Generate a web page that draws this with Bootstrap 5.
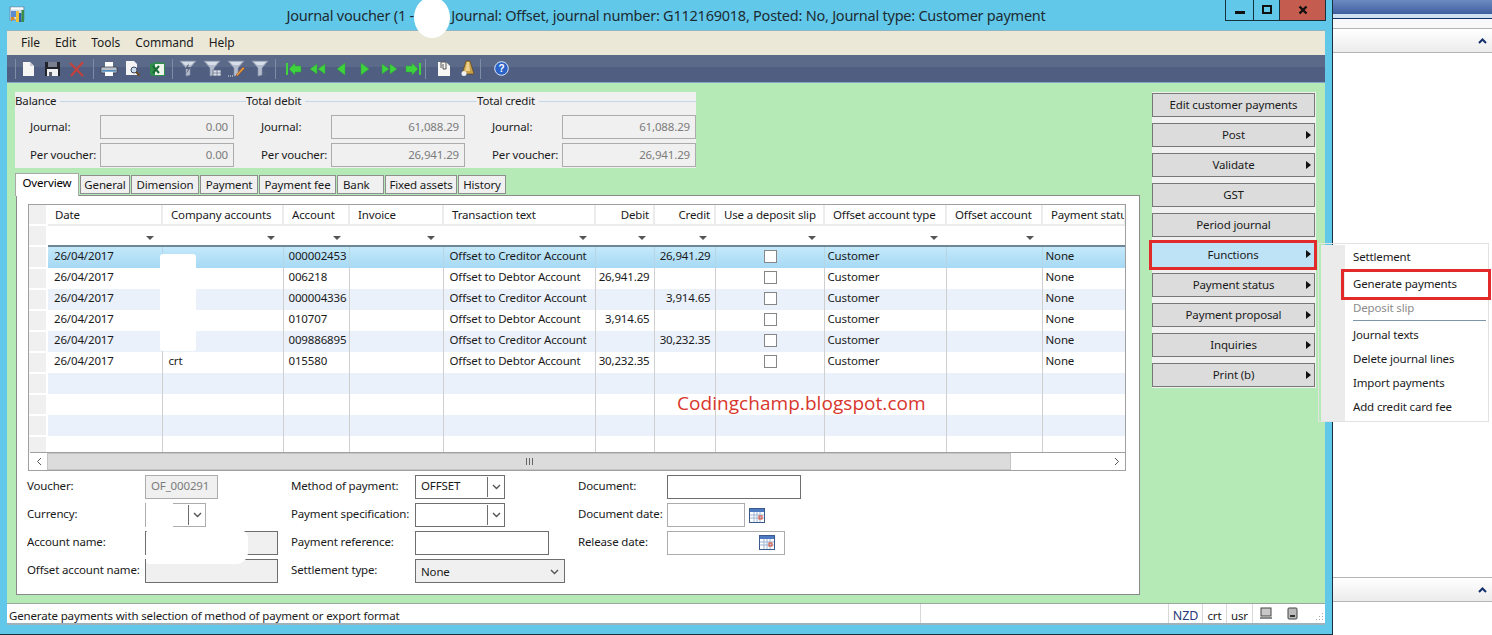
<!DOCTYPE html>
<html lang="en">
<head>
<meta charset="UTF-8">
<title>Journal voucher</title>
<link href="https://cdn.jsdelivr.net/npm/bootstrap@5.3.0/dist/css/bootstrap.min.css" rel="stylesheet">
<style>
html,body{height:635px;overflow:hidden}
body{margin:0;background:#fff;color:#1a1a1a;font:11.5px/16px "Noto Sans","Open Sans",sans-serif;letter-spacing:-.15px;position:relative}
.win{width:1333px;height:635px;background:#62c8ea;border-right:1px solid #17323f;border-bottom:1px solid #17323f;flex:none}
.titlebar{height:30px;display:grid;grid-template-columns:1fr auto 1fr;align-items:center}
.titlebar .ttl{font-size:14.5px;color:#1c2b33;padding-bottom:1px;letter-spacing:-.24px}
.appicon{margin-left:9px;margin-top:-1px}
.winbtns{justify-self:end;align-self:start;margin-right:6px;height:21px;border:1px solid #17323f;border-top:0}
.winbtns span{display:flex;align-items:center;justify-content:center;height:20px}
.winbtns .wmin{width:28px;border-right:1px solid #17323f}
.winbtns .wmax{width:26px;border-right:1px solid #17323f}
.winbtns .wcls{width:45px;background:#c45c50}
.inner{margin:0 7px;height:596px}
.menubar{height:25px;background:#ebe8d8;padding-left:14px;gap:15px;align-items:center;border-top:1px solid #8fb4c4;font-size:12px;letter-spacing:-.05px}
.toolbar{height:28px;background:linear-gradient(#5c6a8a 0 45%,#505e82 45%);border-bottom:1px solid #87a6cc;padding-left:8px;align-items:center}
.tb{width:24px;display:flex;justify-content:center}
.tsep{width:1px;height:20px;background:#7f8ca8}
.s1{margin:0 3px 0 5px}.s2{margin:0 3px}.s3{margin:0 5px 0 3px}.s4{margin:0 6px 0 0}.s5{margin:0 8px 0 0}
.green{height:520px;background:#b5e9b5;padding:9px 9px 0 8px}
.leftcol{width:1124px;flex:none}
.summary{width:681px;height:76px;background:#f0f0f0}
.sumcol{width:231px;flex:none}
.sumcol:last-child{width:219px}
.sumhead{height:18px;align-items:center;gap:4px}
.sumhead i{flex:1;height:1px;background:#c4d6ea}
.sumrow{height:28px;padding-left:15px;align-items:center}
.sumcol .sumrow:nth-child(2){height:29px;margin-top:2px}
.sumrow label{width:70px}
.ro{width:134px;height:24px;background:#f0f0f0;border:1px solid #acacac;text-align:right;padding:0 5px;color:#7c7c7c;line-height:22px}
.nav-tabs.axtabs{margin-top:5px;border:0;height:22px;align-items:flex-end;flex-wrap:nowrap}
.axtabs .nav-link{height:19px;margin:0 1px 1px 0;padding:0;border:1px solid #8e8e8e;border-radius:0;background:#f0f0f0;color:#1a1a1a;font-size:11.5px;line-height:17px;text-align:center}
.axtabs .nav-link.active{height:23px;margin:0 1px -1px 0;background:#fff;border-bottom:0;border-color:#a8a8a8;position:relative;z-index:1;line-height:18px}
.axtabs li:nth-child(1) .nav-link{width:64px}
.axtabs li:nth-child(2) .nav-link{width:50px}
.axtabs li:nth-child(3) .nav-link{width:68px}
.axtabs li:nth-child(4) .nav-link{width:58px}
.axtabs li:nth-child(5) .nav-link{width:77px}
.axtabs li:nth-child(6) .nav-link{width:47px;text-align:left;padding-left:5px}
.axtabs li:nth-child(7) .nav-link{width:72px}
.axtabs li:nth-child(8) .nav-link{width:48px}
.pane{width:1124px;height:400px;margin-left:1px;background:#fff;border:1px solid #8a8a8a;padding:8px 0 0 11px}
.grid{width:1098px;height:267px;border:1px solid #a0a0a0;overflow:hidden}
.gridbody{height:247px;overflow:hidden}
.table.ax{table-layout:fixed;width:1096px;margin:0;border-collapse:collapse;color:#1a1a1a;--bs-table-bg:transparent;--bs-table-border-color:#cfcfcf}
.table.ax td,.table.ax th{height:21px;padding:0 4px 3px 6px;font-weight:400;line-height:18px;white-space:nowrap;overflow:hidden;border:0;border-right:1px solid #cfcfcf;box-shadow:none;vertical-align:middle}
.table.ax thead th{height:19px;padding:0 4px 0 8px;line-height:19px;border-bottom:2px solid #ececec;border-right:2px solid #ececec;background:#fff}
.table.ax thead th:nth-child(2){padding-left:7px}
.table.ax tbody td:nth-child(4){padding-left:5px}
.table.ax tbody td:nth-child(10),.table.ax tbody td:nth-child(12){padding-left:3px}
.table.ax td.text-end,.table.ax th.text-end{padding-left:0}
.table.ax tr.flt td{height:21px;border-bottom:2px solid #6f8696;border-right:0;padding:0 8px 0 0;text-align:right}
.table.ax td.rh,.table.ax th.rh{background:#f0f0f0;border:0;border-bottom:2px solid #fff;border-right:2px solid #fff;padding:0}
.table.ax tr.flt td.rh{border-bottom:2px solid #fff;border-right:2px solid #fff}
.flt span{display:inline-block;border:4px solid transparent;border-top:4px solid #555;border-bottom:0}
.table.ax tr.alt td:not(.rh){background:#eaf1fb}
.table.ax tr.sel td:not(.rh){background:linear-gradient(#c4e8fa,#a6d9f4);border-right-color:#b6d6e6}
.chk{display:block;width:13px;height:13px;margin:0 auto;border:1px solid #868686;background:#fff}
.hscroll{height:18px;border-top:1px solid #a0a0a0;background:#fff;margin-left:1px}
.hbtn{width:17px;display:flex;align-items:center;justify-content:center}
.hthumb{width:964px;background:#dcdcdc;border:1px solid #c4c4c4;display:flex;align-items:center;justify-content:center}
.hthumb b{width:7px;height:7px;background:repeating-linear-gradient(90deg,#666 0 1px,transparent 1px 3px)}
.fgrid{display:grid;grid-template-columns:118px 146px 124px 163px 89px 1fr;grid-auto-rows:24px;row-gap:4px;margin:4px 0 0 -1px;align-items:center}
.fgrid>span{padding-bottom:2px}
.fgrid .fld{height:24px;border:1px solid #acacac;background:#fff;padding:0 5px 2px;line-height:20px;display:flex;align-items:center}
.fgrid .dark{border-color:#6e6e6e}
.fgrid .off{background:#f0f0f0}
.fgrid .w150{padding:1px 5px 0}
.w73{width:73px;color:#7c7c7c}.w61{width:61px}.w133{width:133px}.w90{width:90px}.w134{width:134px}.w150{width:150px}.w78{width:78px}.w118{width:118px}
.sep{margin:2px -5px 0 auto;height:20px;border-left:1px solid #6e6e6e;width:17px;display:flex;align-items:center;justify-content:center}
.rightcol{width:165px;height:296px;margin-left:13px;background:#f0f0f0;padding:1px 1px 0 0;gap:6px}
.btn.axbtn{height:24px;padding:0;background:#dcdcdc;border:1px solid #777;border-radius:0;color:#1a1a1a;font-size:11.5px;line-height:22px;letter-spacing:-.15px;position:relative}
.btn.axbtn.sub::after{content:"";position:absolute;right:3px;top:7px;border:4px solid transparent;border-left:5px solid #111;border-right:0}
.btn.axbtn.hot{background:#bfe3f6;border:0;outline:3px solid #e12a2a;width:162px}
.statusbar{height:22px;background:#fff;border-top:1px solid #9aa7a0;border-bottom:2px solid #9fb1ba;line-height:23px}
.statusbar .msg{width:914px;padding-left:2px;border-right:1px solid #d8d8d8}
.statusbar .msg2{width:248px;border-right:1px solid #d8d8d8}
.st{border-right:1px solid #d8d8d8;text-align:center}
.nzd{width:34px;color:#2a3a78;font-size:12.5px}.crt{width:24px}.usr{width:26px}
.sti{width:26px;display:flex;justify-content:center;align-items:center}
.grip{margin:8px 1px 0 auto}
.side{flex:1}
.side .s-top{height:14px;background:linear-gradient(#6d8bc2,#3f5e9f)}
.side .s-lt{height:5px;background:#cfe0f0;border-bottom:1px solid #12306b}
.side .s-wh{height:9px;background:#f8f8f8}
.shead{height:25px;background:linear-gradient(#fff,#ececec);border-top:1px solid #b4b4b4;border-bottom:1px solid #b4b4b4;padding-right:5px}
.side .s-fill{height:524px}
.axmenu.dropdown-menu{position:absolute;left:1318px;top:243px;width:171px;height:179px;display:block;min-width:0;padding:1px 0 0 2px;border:1px solid #e2e2e2;border-radius:0;font-size:11.5px;background:linear-gradient(90deg,#ebebeb 0 24px,#fff 24px);background-origin:content-box;background-repeat:no-repeat}
.axmenu .dropdown-item{height:24px;line-height:24px;padding:0 0 0 32px;color:#1a1a1a;background:none}
.axmenu .dropdown-item.first{height:25px;margin-bottom:2px}
.axmenu .dropdown-item.disabled{color:#8c8c8c}
.axmenu hr.dropdown-divider{margin:0 2px 2px 32px;border-top:1px solid #7f95a8;opacity:1}
.redbox{position:absolute;left:1341px;top:269px;width:150px;height:31px;border:3px solid #e12a2a;z-index:1001}
.blot{position:absolute;background:#fff}
.b1{left:414px;top:-3px;width:36px;height:41px;border-radius:50%}
.b2{left:160px;top:254px;width:36px;height:97px;border-radius:3px}
.b3{left:146px;top:500px;width:27px;height:29px}
.b4{left:146px;top:530px;width:102px;height:34px;border-radius:4px 8px 12px 3px}
.wmark{position:absolute;left:677px;top:390px;color:#d8362c;font:19px/26px "Open Sans",sans-serif;letter-spacing:.05px}
</style>
</head>
<body class="d-flex">
<svg width="0" height="0" class="position-absolute">
<defs>
<symbol id="i-fun" viewBox="0 0 18 17"><path d="M1 1h16l-6 7v7l-4 1V8z" fill="#b4bdcd" stroke="#8c96aa" stroke-width=".6"/><path d="M3 2h12l-3 3H6z" fill="#d9dfe8"/></symbol>
<symbol id="i-chev" viewBox="0 0 9 6"><path d="M1 1l3.500 3.500L8 1" fill="none" stroke="#555" stroke-width="1.400"/></symbol>
<symbol id="i-cal" viewBox="0 0 16 16"><rect x=".5" y="1.500" width="15" height="14" fill="#fff" stroke="#3c5a8c"/><rect x="1" y="2" width="14" height="3" fill="#4d7ac0"/><path d="M1 8h14M1 11h14M5 5v10M8 5v10M11 5v10" stroke="#9db4d4"/><rect x="10" y="9" width="3" height="3" fill="none" stroke="#d8452c"/></symbol>
<symbol id="i-l" viewBox="0 0 12 14"><path d="M10 1v12L2 7z" fill="#3ed23e" stroke="#2aa034" stroke-width=".5"/></symbol>
<symbol id="i-ll" viewBox="0 0 17 14"><path d="M8 2v10L1 7zM16 2v10L9 7z" fill="#3ed23e" stroke="#2aa034" stroke-width=".5"/></symbol>
</defs>
</svg>

<div class="win d-flex flex-column">
  <div class="titlebar">
    <div><svg class="appicon" width="16" height="17" viewBox="0 0 16 17"><rect x="1" y="1" width="14" height="13" fill="#cfdcec" stroke="#6b7c99" stroke-width=".7"/><rect x="2" y="1.500" width="12" height="2" fill="#fff"/><rect x="2" y="5" width="5" height="6" fill="#5b8ccf"/><path d="M2 11h3l1 3H3l-1 2z" fill="#d98a2b"/><rect x="7" y="5" width="3" height="11" fill="#f0c43a"/><rect x="10" y="7" width="2.500" height="9" fill="#2f5fa8"/><rect x="12.500" y="4" width="2.500" height="12" fill="#3a8f48"/></svg></div>
    <div class="ttl">Journal voucher (1 - xxx - Journal: Offset, journal number: G112169018, Posted: No, Journal type: Customer payment</div>
    <div class="winbtns d-flex">
      <span class="wmin"><svg width="10" height="10" viewBox="0 0 10 10"><rect y="6" width="10" height="3" fill="#111"/></svg></span>
      <span class="wmax"><svg width="10" height="10" viewBox="0 0 10 10"><rect x="1" y="1" width="8" height="7" fill="none" stroke="#111" stroke-width="2"/></svg></span>
      <span class="wcls"><svg width="10" height="10" viewBox="0 0 10 10"><path d="M1.500 1.500l7 7M8.500 1.500l-7 7" stroke="#111" stroke-width="2.400"/></svg></span>
    </div>
  </div>
  <div class="inner">
    <div class="menubar d-flex"><span>File</span><span>Edit</span><span>Tools</span><span>Command</span><span>Help</span></div>
    <div class="toolbar d-flex">
      <i class="tsep"></i>
      <span class="tb"><svg width="13" height="16" viewBox="0 0 13 16"><path d="M1 1h7l4 4v10H1z" fill="#f6f7f4"/><path d="M8 1v4h4z" fill="#c6ccd6"/></svg></span>
      <span class="tb"><svg width="17" height="16" viewBox="0 0 17 16"><rect x="1" y="1" width="15" height="14" fill="#22242c"/><rect x="4" y="1" width="9" height="5" fill="#7a8090"/><rect x="3" y="8" width="11" height="7" fill="#eef0f2"/><rect x="5" y="11" width="3" height="4" fill="#5a5e68"/></svg></span>
      <span class="tb"><svg width="17" height="16" viewBox="0 0 17 16"><path d="M2 2l13 13M15 1L3 15" stroke="#c6403a" stroke-width="2"/></svg></span>
      <i class="tsep s1"></i>
      <span class="tb"><svg width="18" height="16" viewBox="0 0 18 16"><rect x="5" y="1" width="8" height="5" fill="#fff"/><rect x="1" y="6" width="16" height="6" rx="1" fill="#b9bec8" stroke="#2e3440" stroke-width=".7"/><rect x="2" y="9" width="14" height="1.500" fill="#4f8fc0"/><rect x="5" y="11" width="8" height="4" fill="#fff"/></svg></span>
      <span class="tb"><svg width="16" height="17" viewBox="0 0 16 17"><path d="M1 1h8l3 3v11H1z" fill="#f4f5f4"/><circle cx="9" cy="10" r="3" fill="#c8dcee" stroke="#39465e"/><path d="M11 12l3.500 3.500" stroke="#6b4a1c" stroke-width="1.800"/></svg></span>
      <span class="tb"><svg width="17" height="16" viewBox="0 0 17 16"><path d="M1 3l6-2 9 1v13H6l-5-1z" fill="#2f8f4a"/><rect x="6" y="3" width="9" height="11" fill="#eef4ec"/><path d="M4 5l6 7M10 5l-6 7" stroke="#1a6a34" stroke-width="2"/></svg></span>
      <i class="tsep s2"></i>
      <span class="tb"><svg width="18" height="17" viewBox="0 0 18 17"><use href="#i-fun"/><path d="M10 3L6 9h3l-2 5 5-7H9z" fill="#59637e"/></svg></span>
      <span class="tb"><svg width="18" height="17" viewBox="0 0 18 17"><use href="#i-fun"/><rect x="10" y="10" width="8" height="6" fill="#d8dde6" stroke="#59637e" stroke-width=".7"/><path d="M10 13h8M14 10v6" stroke="#59637e" stroke-width=".6"/></svg></span>
      <span class="tb"><svg width="18" height="17" viewBox="0 0 18 17"><use href="#i-fun"/><path d="M9 15l7-8 1.500 1.500-7 7.500z" fill="#e8a23a" stroke="#9c3a20" stroke-width=".5"/><path d="M1 16h6" stroke="#e8e8e8" stroke-dasharray="1 1"/></svg></span>
      <span class="tb"><svg width="18" height="17" viewBox="0 0 18 17"><use href="#i-fun"/><path d="M12 12l4 4M16 12l-4 4" stroke="#59637e"/></svg></span>
      <i class="tsep s3"></i>
      <span class="tb"><svg width="17" height="14" viewBox="0 0 17 14"><rect x="1" y="1" width="2" height="12" fill="#3ed23e"/><path d="M4 7l6-6v3h6v6h-6v3z" fill="#3ed23e" stroke="#2aa034" stroke-width=".5"/></svg></span>
      <span class="tb"><svg width="17" height="14"><use href="#i-ll"/></svg></span>
      <span class="tb"><svg width="12" height="14"><use href="#i-l"/></svg></span>
      <span class="tb"><svg width="12" height="14" viewBox="0 0 12 14"><path d="M2 1v12l8-6z" fill="#3ed23e" stroke="#2aa034" stroke-width=".5"/></svg></span>
      <span class="tb"><svg width="17" height="14" viewBox="0 0 17 14"><path d="M1 2v10l7-5zM9 2v10l7-5z" fill="#3ed23e" stroke="#2aa034" stroke-width=".5"/></svg></span>
      <span class="tb"><svg width="17" height="14" viewBox="0 0 17 14"><rect x="14" y="1" width="2" height="12" fill="#3ed23e"/><path d="M13 7L7 1v3H1v6h6v3z" fill="#3ed23e" stroke="#2aa034" stroke-width=".5"/></svg></span>
      <i class="tsep s4"></i>
      <span class="tb"><svg width="14" height="17" viewBox="0 0 14 17"><path d="M1 2h8l4 4v10H1z" fill="#f6f6f2"/><path d="M4 8V2h5v7H6V4" fill="none" stroke="#555" stroke-width="1"/></svg></span>
      <span class="tb"><svg width="16" height="17" viewBox="0 0 16 17"><path d="M6 1h4l4 13H2z" fill="#c9a04a" stroke="#5c451c" stroke-width=".7"/><path d="M7 2h2l1 9H5z" fill="#edd08a"/><circle cx="4" cy="13.500" r="2.500" fill="#eef0f2"/></svg></span>
      <i class="tsep s5"></i>
      <span class="tb"><svg width="15" height="15" viewBox="0 0 15 15"><circle cx="7.500" cy="7.500" r="6.800" fill="#2a62c8" stroke="#dfe8f6"/><text x="7.500" y="11" text-anchor="middle" font-size="10" font-weight="700" fill="#fff" font-family="Liberation Sans, sans-serif">?</text></svg></span>
    </div>
    <div class="green d-flex">
      <div class="leftcol">
        <div class="summary d-flex">
          <div class="sumcol">
            <div class="sumhead d-flex"><span>Balance</span><i></i></div>
            <div class="sumrow d-flex"><label>Journal:</label><div class="ro">0.00</div></div>
            <div class="sumrow d-flex"><label>Per voucher:</label><div class="ro">0.00</div></div>
          </div>
          <div class="sumcol">
            <div class="sumhead d-flex"><span>Total debit</span><i></i></div>
            <div class="sumrow d-flex"><label>Journal:</label><div class="ro">61,088.29</div></div>
            <div class="sumrow d-flex"><label>Per voucher:</label><div class="ro">26,941.29</div></div>
          </div>
          <div class="sumcol">
            <div class="sumhead d-flex"><span>Total credit</span><i></i></div>
            <div class="sumrow d-flex"><label>Journal:</label><div class="ro">61,088.29</div></div>
            <div class="sumrow d-flex"><label>Per voucher:</label><div class="ro">26,941.29</div></div>
          </div>
        </div>
        <ul class="nav nav-tabs axtabs">
          <li class="nav-item"><a class="nav-link active" href="#">Overview</a></li>
          <li class="nav-item"><a class="nav-link" href="#">General</a></li>
          <li class="nav-item"><a class="nav-link" href="#">Dimension</a></li>
          <li class="nav-item"><a class="nav-link" href="#">Payment</a></li>
          <li class="nav-item"><a class="nav-link" href="#">Payment fee</a></li>
          <li class="nav-item"><a class="nav-link" href="#">Bank</a></li>
          <li class="nav-item"><a class="nav-link" href="#">Fixed assets</a></li>
          <li class="nav-item"><a class="nav-link" href="#">History</a></li>
        </ul>
        <div class="pane">
          <div class="grid">
            <div class="gridbody">
              <table class="table ax">
                <colgroup id="cols"></colgroup>
                <thead id="head"></thead>
                <tbody id="rows"></tbody>
              </table>
            </div>
            <div class="hscroll d-flex">
              <span class="hbtn"><svg width="6" height="9" viewBox="0 0 6 9"><path d="M5 1L1.500 4.500 5 8" fill="none" stroke="#555"/></svg></span>
              <span class="hthumb"><b></b></span>
              <span class="flex-grow-1"></span>
              <span class="hbtn"><svg width="6" height="9" viewBox="0 0 6 9"><path d="M1 1l3.500 3.500L1 8" fill="none" stroke="#555"/></svg></span>
            </div>
          </div>
          <div class="fgrid">
            <span>Voucher:</span><div class="fld off w73">OF_000291</div>
            <span>Method of payment:</span><div class="fld dark w90">OFFSET<span class="sep"><svg width="9" height="6"><use href="#i-chev"/></svg></span></div>
            <span>Document:</span><div class="fld dark w134"></div>

            <span>Currency:</span><div class="fld w61"><span class="sep"><svg width="9" height="6"><use href="#i-chev"/></svg></span></div>
            <span>Payment specification:</span><div class="fld dark w90"><span class="sep"><svg width="9" height="6"><use href="#i-chev"/></svg></span></div>
            <span>Document date:</span><div class="d-flex align-items-center gap-1"><div class="fld w78"></div><svg width="16" height="16"><use href="#i-cal"/></svg></div>

            <span>Account name:</span><div class="fld off dark w133"></div>
            <span>Payment reference:</span><div class="fld dark w134"></div>
            <span>Release date:</span><div class="fld w118 justify-content-end"><svg class="me-1" width="16" height="16"><use href="#i-cal"/></svg></div>

            <span>Offset account name:</span><div class="fld off dark w133"></div>
            <span>Settlement type:</span><div class="fld off dark w150">None<svg class="ms-auto" width="9" height="6"><use href="#i-chev"/></svg></div>
          </div>
        </div>
      </div>
      <div class="rightcol d-flex flex-column" id="actions"></div>
    </div>
    <div class="statusbar d-flex">
      <span class="msg text-nowrap">Generate payments with selection of method of payment or export format</span>
      <span class="msg2"></span>
      <span class="st nzd">NZD</span><span class="st crt">crt</span><span class="st usr">usr</span>
      <span class="sti"><svg width="14" height="13" viewBox="0 0 14 13"><rect x="2" y="1" width="10" height="8" fill="#c8c8c8" stroke="#444"/><rect x="1" y="10" width="12" height="2" fill="#888"/></svg></span>
      <span class="sti"><svg width="11" height="13" viewBox="0 0 11 13"><rect x="1" y="1" width="9" height="11" rx="1" fill="#bbb" stroke="#444"/><rect x="3" y="8" width="5" height="2" fill="#333"/></svg></span>
      <svg class="grip" width="9" height="9" viewBox="0 0 9 9"><path d="M7 1h1v1H7zM4 4h1v1H4zM7 4h1v1H7zM1 7h1v1H1zM4 7h1v1H4zM7 7h1v1H7z" fill="#aaa"/></svg>
    </div>
  </div>
</div>

<div class="side d-flex flex-column">
  <div class="s-top"></div><div class="s-lt"></div><div class="s-wh"></div>
  <div class="shead d-flex justify-content-end align-items-center"><svg width="9" height="6" viewBox="0 0 9 6"><path d="M1 5l3.500-3.500L8 5" fill="none" stroke="#12306b" stroke-width="2"/></svg></div>
  <div class="s-fill"></div>
  <div class="shead d-flex justify-content-end align-items-center"><svg width="9" height="6" viewBox="0 0 9 6"><path d="M1 5l3.500-3.500L8 5" fill="none" stroke="#12306b" stroke-width="2"/></svg></div>
</div>

<span class="blot b1"></span><span class="blot b2"></span><span class="blot b3"></span><span class="blot b4"></span>
<span class="wmark">Codingchamp.blogspot.com</span>

<ul class="dropdown-menu axmenu list-unstyled">
  <li><a class="dropdown-item first" href="#">Settlement</a></li>
  <li><a class="dropdown-item" href="#">Generate payments</a></li>
  <li><a class="dropdown-item disabled" href="#">Deposit slip</a></li>
  <li><hr class="dropdown-divider"></li>
  <li><a class="dropdown-item" href="#">Journal texts</a></li>
  <li><a class="dropdown-item" href="#">Delete journal lines</a></li>
  <li><a class="dropdown-item" href="#">Import payments</a></li>
  <li><a class="dropdown-item" href="#">Add credit card fee</a></li>
</ul>
<span class="redbox"></span>

<script src="https://cdn.jsdelivr.net/npm/bootstrap@5.3.0/dist/js/bootstrap.bundle.min.js"></script>
<script>
const widths = [18,115,121,66,94,152,59,61,109,122,96,83];
const headers = ['', 'Date', 'Company accounts', 'Account', 'Invoice', 'Transaction text', 'Debit', 'Credit', 'Use a deposit slip', 'Offset account type', 'Offset account', 'Payment status'];
const lines = [
  ['', '000002453', 'Offset to Creditor Account', '', '26,941.29'],
  ['', '006218', 'Offset to Debtor Account', '26,941.29', ''],
  ['', '000004336', 'Offset to Creditor Account', '', '3,914.65'],
  ['', '010707', 'Offset to Debtor Account', '3,914.65', ''],
  ['', '009886895', 'Offset to Creditor Account', '', '30,232.35'],
  ['crt', '015580', 'Offset to Debtor Account', '30,232.35', '']
];
const right = i => i === 6 || i === 7 ? ' class="text-end"' : '';

document.getElementById('cols').innerHTML = widths.map(w => `<col style="width:${w}px">`).join('');

let head = '<tr>' + headers.map((h, i) => i === 0 ? '<th class="rh"></th>' : `<th${right(i)}>${h}</th>`).join('') + '</tr>';
head += '<tr class="flt">' + headers.map((h, i) => i === 0 ? '<td class="rh"></td>' : (i === 11 ? '<td></td>' : '<td><span></span></td>')).join('') + '</tr>';
document.getElementById('head').innerHTML = head;

let body = '';
for (let r = 0; r < 10; r++) {
  const l = lines[r];
  const cls = r === 0 ? 'sel' : (r % 2 === 0 ? 'alt' : '');
  if (l) {
    body += `<tr class="${cls}"><td class="rh"></td><td>26/04/2017</td><td>${l[0]}</td><td>${l[1]}</td><td></td><td>${l[2]}</td>` +
      `<td class="text-end">${l[3]}</td><td class="text-end">${l[4]}</td><td><span class="chk"></span></td><td>Customer</td><td></td><td>None</td></tr>`;
  } else {
    body += `<tr class="${cls}"><td class="rh"></td>` + '<td></td>'.repeat(11) + '</tr>';
  }
}
document.getElementById('rows').innerHTML = body;

const actions = [
  ['Edit customer payments', ''], ['Post', 'sub'], ['Validate', 'sub'], ['GST', ''], ['Period journal', ''],
  ['Functions', 'sub hot'], ['Payment status', 'sub'], ['Payment proposal', 'sub'], ['Inquiries', 'sub'], ['Print (b)', 'sub']
];
document.getElementById('actions').innerHTML = actions.map(a => `<button type="button" class="btn axbtn ${a[1]}">${a[0]}</button>`).join('');
</script>
</body>
</html>
